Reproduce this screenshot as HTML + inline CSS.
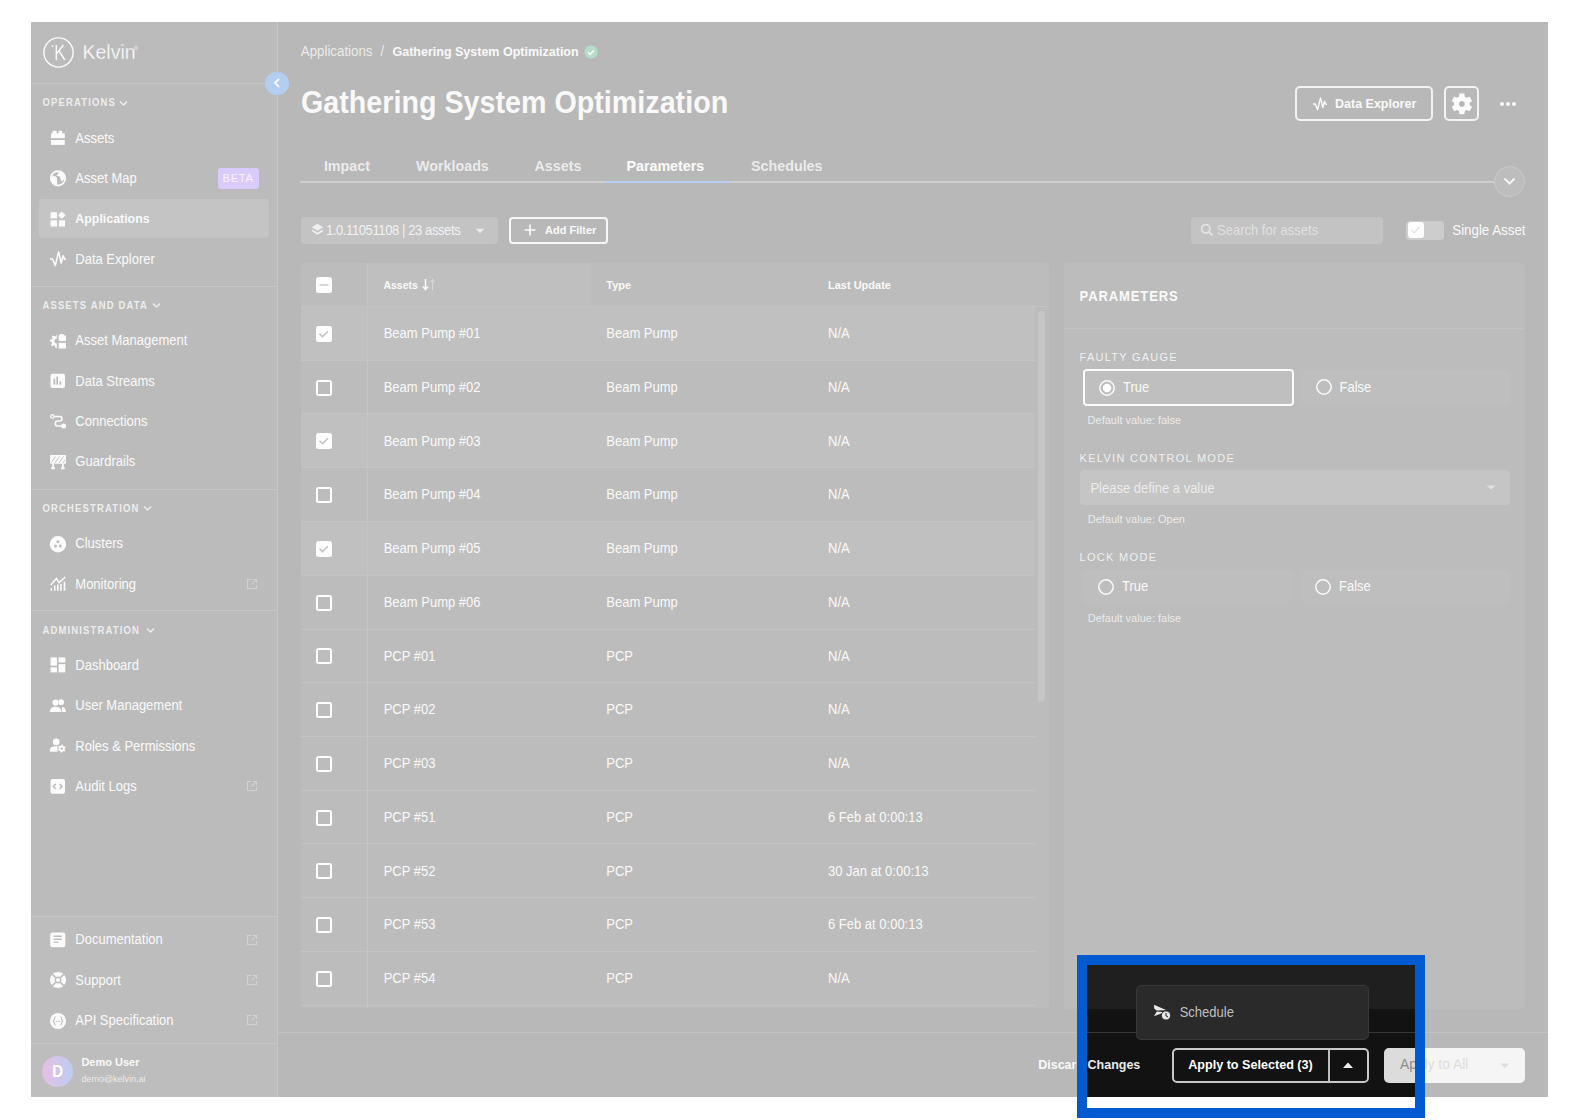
<!DOCTYPE html><html><head><meta charset="utf-8"><style>
html,body{margin:0;padding:0;}
body{width:1580px;height:1120px;position:relative;overflow:hidden;background:#ffffff;font-family:"Liberation Sans", sans-serif;}
.t{position:absolute;white-space:nowrap;}
.r{position:absolute;display:block;}
</style></head><body>
<div class="r" style="left:31px;top:22px;width:1517px;height:1075px;background:#121212;"></div>
<div class="r" style="left:31px;top:22px;width:246px;height:1075px;background:#1c1c1c;"></div>
<div class="r" style="left:31px;top:916px;width:246px;height:181px;background:#222222;"></div>
<div class="r" style="left:277px;top:22px;width:1px;height:1075px;background:#3c3c3c;"></div>
<div class="r" style="left:31px;top:83px;width:246px;height:1px;background:#3c3c3c;"></div>
<div class="r" style="left:31px;top:286px;width:246px;height:1px;background:#3c3c3c;"></div>
<div class="r" style="left:31px;top:489px;width:246px;height:1px;background:#3c3c3c;"></div>
<div class="r" style="left:31px;top:610px;width:246px;height:1px;background:#3c3c3c;"></div>
<div class="r" style="left:31px;top:916px;width:246px;height:1px;background:#3c3c3c;"></div>
<div class="r" style="left:31px;top:1043px;width:246px;height:1px;background:#3c3c3c;"></div>
<svg class="r" style="left:42px;top:36px;" width="34" height="34" viewBox="0 0 34 34"><circle cx="16.5" cy="16.5" r="14.6" fill="none" stroke="#f2f2f2" stroke-width="1.4"/><path d="M14.3 9V24M14.3 18L21.5 9M17 15L22.8 24" fill="none" stroke="#f2f2f2" stroke-width="1.4"/><circle cx="10.6" cy="10.2" r="0.9" fill="#f2f2f2"/></svg>
<div class="t" style="left:82.50px;top:43.49px;font-size:19.5px;line-height:19.5px;color:#f0f0f0;font-weight:400;transform:scaleY(1.07);transform-origin:0 16.51px;-webkit-text-stroke:0.3px #1c1c1c;">Kelvin</div>
<svg class="r" style="left:133px;top:44.5px;" width="6" height="6" viewBox="0 0 6 6"><circle cx="3" cy="3" r="1.6" fill="none" stroke="#f2f2f2" stroke-width="0.55"/></svg>
<div class="t" style="left:42.40px;top:98.46px;font-size:9.5px;line-height:9.5px;color:#c4c4c4;font-weight:700;letter-spacing:1.15px;transform:scaleY(1.07);transform-origin:0 8.04px;">OPERATIONS</div>
<svg class="r" style="left:119px;top:99.5px;" width="9" height="7" viewBox="0 0 9 7"><path d="M1 1.5L4.5 5L8 1.5" fill="none" stroke="#c4c4c4" stroke-width="1.5"/></svg>
<div class="t" style="left:42.40px;top:300.96px;font-size:9.5px;line-height:9.5px;color:#c4c4c4;font-weight:700;letter-spacing:1.15px;transform:scaleY(1.07);transform-origin:0 8.04px;">ASSETS AND DATA</div>
<svg class="r" style="left:152px;top:302px;" width="9" height="7" viewBox="0 0 9 7"><path d="M1 1.5L4.5 5L8 1.5" fill="none" stroke="#c4c4c4" stroke-width="1.5"/></svg>
<div class="t" style="left:42.40px;top:503.96px;font-size:9.5px;line-height:9.5px;color:#c4c4c4;font-weight:700;letter-spacing:1.15px;transform:scaleY(1.07);transform-origin:0 8.04px;">ORCHESTRATION</div>
<svg class="r" style="left:143px;top:505px;" width="9" height="7" viewBox="0 0 9 7"><path d="M1 1.5L4.5 5L8 1.5" fill="none" stroke="#c4c4c4" stroke-width="1.5"/></svg>
<div class="t" style="left:42.40px;top:625.96px;font-size:9.5px;line-height:9.5px;color:#c4c4c4;font-weight:700;letter-spacing:1.15px;transform:scaleY(1.07);transform-origin:0 8.04px;">ADMINISTRATION</div>
<svg class="r" style="left:146px;top:627px;" width="9" height="7" viewBox="0 0 9 7"><path d="M1 1.5L4.5 5L8 1.5" fill="none" stroke="#c4c4c4" stroke-width="1.5"/></svg>
<div class="r" style="left:39px;top:199px;width:230px;height:39px;background:#3a3a3a;border-radius:4px;"></div>
<div class="t" style="left:75.30px;top:131.79px;font-size:13px;line-height:13px;color:#ececec;font-weight:400;transform:scaleY(1.07);transform-origin:0 11.01px;">Assets</div>
<svg class="r" style="left:50px;top:130.00px;overflow:visible" width="16" height="16" viewBox="0 0 16 16"><rect x="2.4" y="0.7" width="4.3" height="4" rx="1" fill="#f2f2f2"/><rect x="8.6" y="0.7" width="3.6" height="4" rx="1" fill="#f2f2f2"/><rect x="1" y="3.4" width="13.8" height="4.8" fill="#f2f2f2"/><rect x="1" y="10" width="13.8" height="4.9" fill="#f2f2f2"/></svg>
<div class="t" style="left:75.30px;top:171.79px;font-size:13px;line-height:13px;color:#ececec;font-weight:400;transform:scaleY(1.07);transform-origin:0 11.01px;">Asset Map</div>
<svg class="r" style="left:50px;top:170.00px;overflow:visible" width="16" height="16" viewBox="0 0 16 16"><circle cx="8" cy="8.3" r="7.2" fill="none" stroke="#f2f2f2" stroke-width="1.8"/><path d="M2 5.5C4 6.5 5.5 5.8 6.5 7.2C7.6 8.8 6.6 10.5 7.2 12.5L6.8 15.2C3.5 14.5 1 11.5 1.2 8Z" fill="#f2f2f2"/><path d="M8.2 1.2C8.8 3 8.4 4.8 6 5.2L10 6.8C10.6 8.5 10.3 10 11.8 11.5L14.6 8.8C14.8 5.5 12.8 2.5 10.5 1.4Z" fill="#f2f2f2"/></svg>
<div class="t" style="left:75.30px;top:212.80px;font-size:12.4px;line-height:12.4px;color:#ececec;font-weight:700;transform:scaleY(1.07);transform-origin:0 10.50px;">Applications</div>
<svg class="r" style="left:50px;top:210.50px;overflow:visible" width="16" height="16" viewBox="0 0 16 16"><rect x="0.55" y="1.25" width="6.45" height="6.15" fill="#f2f2f2"/><rect x="0.55" y="9.3" width="6.45" height="6.2" fill="#f2f2f2"/><rect x="8.9" y="9.3" width="6.1" height="6.2" fill="#f2f2f2"/><path d="M11.8 0.4L15.6 4.2L11.8 8L8 4.2Z" fill="#f2f2f2"/></svg>
<div class="t" style="left:75.30px;top:252.79px;font-size:13px;line-height:13px;color:#ececec;font-weight:400;transform:scaleY(1.07);transform-origin:0 11.01px;">Data Explorer</div>
<svg class="r" style="left:50px;top:251.00px;overflow:visible" width="16" height="16" viewBox="0 0 16 16"><path d="M0 8H2.6L5.3 14.6L8.6 1L11.2 12L13.1 4.8L14.6 8.2H16" fill="none" stroke="#f2f2f2" stroke-width="1.6" stroke-linejoin="round"/></svg>
<div class="t" style="left:75.30px;top:334.29px;font-size:13px;line-height:13px;color:#ececec;font-weight:400;transform:scaleY(1.07);transform-origin:0 11.01px;">Asset Management</div>
<svg class="r" style="left:50px;top:332.50px;overflow:visible" width="16" height="16" viewBox="0 0 16 16"><polygon points="6.80,1.20 8.17,1.33 8.71,3.58 9.58,4.04 11.75,3.25 12.62,4.31 11.42,6.29 11.70,7.22 13.80,8.20 13.67,9.57 11.42,10.11 10.96,10.98 11.75,13.15 10.69,14.02 8.71,12.82 7.78,13.10 6.80,15.20 5.43,15.07 4.89,12.82 4.02,12.36 1.85,13.15 0.98,12.09 2.18,10.11 1.90,9.18 -0.20,8.20 -0.07,6.83 2.18,6.29 2.64,5.42 1.85,3.25 2.91,2.38 4.89,3.58 5.82,3.30" fill="#f2f2f2"/><circle cx="6.8" cy="8.2" r="2.4" fill="#1c1c1c"/><rect x="6.8" y="0" width="9.2" height="16" fill="#1c1c1c"/><path d="M8.6 7.9V2.6L10.2 1H13.2L14.4 2.4H16V7.9Z" fill="#f2f2f2"/><rect x="8.6" y="9.8" width="7.4" height="5.7" fill="#f2f2f2"/></svg>
<div class="t" style="left:75.30px;top:374.79px;font-size:13px;line-height:13px;color:#ececec;font-weight:400;transform:scaleY(1.07);transform-origin:0 11.01px;">Data Streams</div>
<svg class="r" style="left:50px;top:373.00px;overflow:visible" width="16" height="16" viewBox="0 0 16 16"><rect x="0.5" y="0.7" width="14.5" height="14.3" rx="2.2" fill="#f2f2f2"/><rect x="3.5" y="5.8" width="1.7" height="5.9" fill="#1c1c1c"/><rect x="6.4" y="3.6" width="1.7" height="8.1" fill="#1c1c1c"/><rect x="9.5" y="8.4" width="1.7" height="3.3" fill="#1c1c1c"/></svg>
<div class="t" style="left:75.30px;top:414.79px;font-size:13px;line-height:13px;color:#ececec;font-weight:400;transform:scaleY(1.07);transform-origin:0 11.01px;">Connections</div>
<svg class="r" style="left:50px;top:413.00px;overflow:visible" width="16" height="16" viewBox="0 0 16 16"><circle cx="2.4" cy="3.4" r="1.7" fill="none" stroke="#f2f2f2" stroke-width="1.3"/><circle cx="13.6" cy="13" r="2.5" fill="#f2f2f2"/><path d="M4.2 3.5H10C12.6 3.5 12.6 8 10 8H7.4C4.6 8 4.6 12.9 7.4 12.9H12" fill="none" stroke="#f2f2f2" stroke-width="1.5"/></svg>
<div class="t" style="left:75.30px;top:455.29px;font-size:13px;line-height:13px;color:#ececec;font-weight:400;transform:scaleY(1.07);transform-origin:0 11.01px;">Guardrails</div>
<svg class="r" style="left:50px;top:453.50px;overflow:visible" width="16" height="16" viewBox="0 0 16 16"><rect x="0" y="1.1" width="16" height="8.6" rx="0.8" fill="#f2f2f2"/><path d="M1.5 8.2L5.5 2.6M5 8.9L9.6 2.2M9 8.9L13.6 2.2M13 8.9L15.2 5.6" stroke="#1c1c1c" stroke-width="0.9"/><rect x="2.2" y="9.7" width="1.8" height="4" fill="#f2f2f2"/><rect x="12" y="9.7" width="1.8" height="4" fill="#f2f2f2"/><rect x="1.2" y="13.2" width="3.8" height="2.1" rx="0.6" fill="#f2f2f2"/><rect x="11" y="13.2" width="3.8" height="2.1" rx="0.6" fill="#f2f2f2"/></svg>
<div class="t" style="left:75.30px;top:537.29px;font-size:13px;line-height:13px;color:#ececec;font-weight:400;transform:scaleY(1.07);transform-origin:0 11.01px;">Clusters</div>
<svg class="r" style="left:50px;top:535.50px;overflow:visible" width="16" height="16" viewBox="0 0 16 16"><circle cx="8" cy="8.2" r="8.2" fill="#f2f2f2"/><circle cx="7.9" cy="5.8" r="1.5" fill="#1c1c1c"/><circle cx="5.5" cy="9.9" r="1.5" fill="#1c1c1c"/><circle cx="10.2" cy="9.9" r="1.5" fill="#1c1c1c"/></svg>
<div class="t" style="left:75.30px;top:577.79px;font-size:13px;line-height:13px;color:#ececec;font-weight:400;transform:scaleY(1.07);transform-origin:0 11.01px;">Monitoring</div>
<svg class="r" style="left:50px;top:576.00px;overflow:visible" width="16" height="16" viewBox="0 0 16 16"><path d="M0.8 9L6.4 2.6L9.1 6.6L15.3 1" fill="none" stroke="#f2f2f2" stroke-width="1.5"/><rect x="0.5" y="12.2" width="1.5" height="2.6" fill="#f2f2f2"/><rect x="4" y="9.6" width="1.5" height="5.2" fill="#f2f2f2"/><rect x="7" y="8.6" width="1.6" height="6.2" fill="#f2f2f2"/><rect x="10.2" y="7.9" width="1.6" height="6.9" fill="#f2f2f2"/><rect x="13.7" y="5.6" width="1.6" height="9.2" fill="#f2f2f2"/></svg>
<svg class="r" style="left:246px;top:578px;" width="12" height="12" viewBox="0 0 12 12"><path d="M5 1.5H1.5V10.5H10.5V7M7 1.5H10.5V5M10.5 1.5L5.5 6.5" fill="none" stroke="#6a6a6a" stroke-width="1.1"/></svg>
<div class="t" style="left:75.30px;top:658.79px;font-size:13px;line-height:13px;color:#ececec;font-weight:400;transform:scaleY(1.07);transform-origin:0 11.01px;">Dashboard</div>
<svg class="r" style="left:50px;top:657.00px;overflow:visible" width="16" height="16" viewBox="0 0 16 16"><rect x="0.55" y="0.4" width="6.45" height="8.3" fill="#f2f2f2"/><rect x="8.6" y="0.4" width="6.7" height="5.1" fill="#f2f2f2"/><rect x="0.55" y="10.3" width="6.45" height="5.1" fill="#f2f2f2"/><rect x="8.6" y="7.1" width="6.7" height="8.3" fill="#f2f2f2"/></svg>
<div class="t" style="left:75.30px;top:699.29px;font-size:13px;line-height:13px;color:#ececec;font-weight:400;transform:scaleY(1.07);transform-origin:0 11.01px;">User Management</div>
<svg class="r" style="left:50px;top:697.50px;overflow:visible" width="16" height="16" viewBox="0 0 16 16"><circle cx="11" cy="4.2" r="3" fill="#f2f2f2"/><path d="M12 8.8C14.6 9.3 16 10.9 16 14H12Z" fill="#f2f2f2"/><circle cx="5.6" cy="4.6" r="3.5" fill="#1c1c1c"/><circle cx="5.6" cy="4.6" r="3.1" fill="#f2f2f2"/><path d="M-0.6 14.6C-0.6 10.2 2.2 8.4 5.6 8.4C9 8.4 12.3 10.2 12.3 14.6Z" fill="#1c1c1c"/><path d="M-0.2 14C-0.2 10.3 2.5 8.8 5.6 8.8C8.7 8.8 11.6 10.3 11.6 14Z" fill="#f2f2f2"/></svg>
<div class="t" style="left:75.30px;top:739.79px;font-size:13px;line-height:13px;color:#ececec;font-weight:400;transform:scaleY(1.07);transform-origin:0 11.01px;">Roles & Permissions</div>
<svg class="r" style="left:50px;top:738.00px;overflow:visible" width="16" height="16" viewBox="0 0 16 16"><circle cx="6.2" cy="3.9" r="3.3" fill="#f2f2f2"/><path d="M-0.2 13.8V12C-0.2 9.8 2.6 8.3 6 8.3C6.6 8.3 7.2 8.4 7.6 8.5V13.8Z" fill="#f2f2f2"/><polygon points="11.80,6.10 12.96,6.25 13.50,7.66 14.20,8.20 15.70,8.35 16.15,9.44 15.20,10.60 15.08,11.48 15.70,12.85 14.98,13.78 13.50,13.54 12.68,13.88 11.80,15.10 10.64,14.95 10.10,13.54 9.40,13.00 7.90,12.85 7.45,11.76 8.40,10.60 8.52,9.72 7.90,8.35 8.62,7.42 10.10,7.66 10.92,7.32" fill="#1c1c1c"/><polygon points="11.80,6.60 12.84,6.74 13.30,8.00 13.92,8.48 15.26,8.60 15.66,9.56 14.80,10.60 14.70,11.38 15.26,12.60 14.63,13.43 13.30,13.20 12.58,13.50 11.80,14.60 10.76,14.46 10.30,13.20 9.68,12.72 8.34,12.60 7.94,11.64 8.80,10.60 8.90,9.82 8.34,8.60 8.97,7.77 10.30,8.00 11.02,7.70" fill="#f2f2f2"/><circle cx="11.8" cy="10.6" r="1.2" fill="#1c1c1c"/></svg>
<div class="t" style="left:75.30px;top:780.29px;font-size:13px;line-height:13px;color:#ececec;font-weight:400;transform:scaleY(1.07);transform-origin:0 11.01px;">Audit Logs</div>
<svg class="r" style="left:50px;top:778.50px;overflow:visible" width="16" height="16" viewBox="0 0 16 16"><rect x="0.55" y="0.1" width="14.45" height="14.7" rx="2" fill="#f2f2f2"/><path d="M5.8 5L3.5 7.5L5.8 10M9.6 5L11.9 7.5L9.6 10" fill="none" stroke="#1c1c1c" stroke-width="1.5"/></svg>
<svg class="r" style="left:246px;top:780px;" width="12" height="12" viewBox="0 0 12 12"><path d="M5 1.5H1.5V10.5H10.5V7M7 1.5H10.5V5M10.5 1.5L5.5 6.5" fill="none" stroke="#6a6a6a" stroke-width="1.1"/></svg>
<div class="t" style="left:75.30px;top:933.39px;font-size:13px;line-height:13px;color:#ececec;font-weight:400;transform:scaleY(1.07);transform-origin:0 11.01px;">Documentation</div>
<svg class="r" style="left:50px;top:931.60px;overflow:visible" width="16" height="16" viewBox="0 0 16 16"><rect x="0.3" y="0.4" width="15" height="14.8" rx="2" fill="#f2f2f2"/><path d="M3.6 4.3H11.8M3.6 7.2H11.8M3.6 10.1H8.6" stroke="#222222" stroke-width="1.4"/></svg>
<svg class="r" style="left:246px;top:934px;" width="12" height="12" viewBox="0 0 12 12"><path d="M5 1.5H1.5V10.5H10.5V7M7 1.5H10.5V5M10.5 1.5L5.5 6.5" fill="none" stroke="#6a6a6a" stroke-width="1.1"/></svg>
<div class="t" style="left:75.30px;top:974.19px;font-size:13px;line-height:13px;color:#ececec;font-weight:400;transform:scaleY(1.07);transform-origin:0 11.01px;">Support</div>
<svg class="r" style="left:50px;top:972.40px;overflow:visible" width="16" height="16" viewBox="0 0 16 16"><circle cx="8" cy="8" r="8" fill="#f2f2f2"/><circle cx="8" cy="8" r="3.4" fill="#222222"/><circle cx="8" cy="8" r="2.1" fill="#f2f2f2"/><path d="M2.3 2.3L5.5 5.5M13.7 2.3L10.5 5.5M2.3 13.7L5.5 10.5M13.7 13.7L10.5 10.5" stroke="#222222" stroke-width="1.7"/></svg>
<svg class="r" style="left:246px;top:974px;" width="12" height="12" viewBox="0 0 12 12"><path d="M5 1.5H1.5V10.5H10.5V7M7 1.5H10.5V5M10.5 1.5L5.5 6.5" fill="none" stroke="#6a6a6a" stroke-width="1.1"/></svg>
<div class="t" style="left:75.30px;top:1014.29px;font-size:13px;line-height:13px;color:#ececec;font-weight:400;transform:scaleY(1.07);transform-origin:0 11.01px;">API Specification</div>
<svg class="r" style="left:50px;top:1012.50px;overflow:visible" width="16" height="16" viewBox="0 0 16 16"><circle cx="8" cy="8" r="8" fill="#f2f2f2"/><path d="M5.6 3.8C4 3.8 4.6 7.4 3.4 8C4.6 8.6 4 12.2 5.6 12.2M10.4 3.8C12 3.8 11.4 7.4 12.6 8C11.4 8.6 12 12.2 10.4 12.2" fill="none" stroke="#222222" stroke-width="1.1"/><circle cx="6.5" cy="8.3" r="0.55" fill="#222222"/><circle cx="8" cy="8.3" r="0.55" fill="#222222"/><circle cx="9.5" cy="8.3" r="0.55" fill="#222222"/></svg>
<svg class="r" style="left:246px;top:1014px;" width="12" height="12" viewBox="0 0 12 12"><path d="M5 1.5H1.5V10.5H10.5V7M7 1.5H10.5V5M10.5 1.5L5.5 6.5" fill="none" stroke="#6a6a6a" stroke-width="1.1"/></svg>
<div class="r" style="left:218px;top:167.5px;width:41px;height:21.5px;background:#7f55f7;border-radius:3px;"></div>
<div class="t" style="left:222.50px;top:173.12px;font-size:11.2px;line-height:11.2px;color:#e4dcfa;font-weight:400;letter-spacing:0.7px;">BETA</div>
<div class="r" style="left:42px;top:1055.5px;width:31px;height:31px;border-radius:50%;background:linear-gradient(90deg,#b02aa0,#1a5ad0);"></div>
<div class="t" style="left:52.30px;top:1063.60px;font-size:15px;line-height:15px;color:#ffffff;font-weight:700;transform:scaleY(1.07);transform-origin:0 12.70px;">D</div>
<div class="t" style="left:81.40px;top:1057.29px;font-size:11px;line-height:11px;color:#ececec;font-weight:700;transform:scaleY(1.07);transform-origin:0 9.31px;">Demo User</div>
<div class="t" style="left:81.40px;top:1075.38px;font-size:9px;line-height:9px;color:#c0c0c0;font-weight:400;transform:scaleY(1.07);transform-origin:0 7.62px;">demo@kelvin.ai</div>
<div class="r" style="left:265.2px;top:71.6px;width:23.5px;height:23.5px;border-radius:50%;background:#005ad0;"></div>
<svg class="r" style="left:271px;top:77px;" width="12" height="12" viewBox="0 0 12 12"><path d="M8 1.8L4 5.8L8 9.8" fill="none" stroke="#ffffff" stroke-width="1.8"/></svg>
<div class="t" style="left:300.80px;top:44.74px;font-size:13.3px;line-height:13.3px;color:#c0c0c0;font-weight:400;transform:scaleY(1.07);transform-origin:0 11.26px;">Applications</div>
<div class="t" style="left:380.50px;top:44.99px;font-size:13px;line-height:13px;color:#c0c0c0;font-weight:400;transform:scaleY(1.07);transform-origin:0 11.01px;">/</div>
<div class="t" style="left:392.50px;top:45.72px;font-size:12.5px;line-height:12.5px;color:#ececec;font-weight:700;transform:scaleY(1.07);transform-origin:0 10.58px;">Gathering System Optimization</div>
<svg class="r" style="left:583.7px;top:44.6px;" width="14" height="14" viewBox="0 0 14 14"><circle cx="7" cy="7" r="6.6" fill="#058c50"/><path d="M4 7.3L6.1 9.3L10 5.3" fill="none" stroke="#ffffff" stroke-width="1.8"/></svg>
<div class="t" style="left:301.00px;top:89.30px;font-size:28.7px;line-height:28.7px;color:#ececec;font-weight:700;transform:scaleY(1.07);transform-origin:0 24.30px;">Gathering System Optimization</div>
<div class="r" style="left:1295px;top:86px;width:134px;height:31px;border:2px solid #d8d8d8;border-radius:5px;"></div>
<svg class="r" style="left:1312.5px;top:97px" width="14" height="14" viewBox="0 0 16 16"><path d="M0 8H2.6L5.3 14.6L8.6 1L11.2 12L13.1 4.8L14.6 8.2H16" fill="none" stroke="#f2f2f2" stroke-width="1.6" stroke-linejoin="round"/></svg>
<div class="t" style="left:1335.00px;top:98.02px;font-size:12.5px;line-height:12.5px;color:#ececec;font-weight:700;transform:scaleY(1.07);transform-origin:0 10.58px;">Data Explorer</div>
<div class="r" style="left:1444px;top:86px;width:31px;height:31px;border:2px solid #d8d8d8;border-radius:5px;"></div>
<svg class="r" style="left:1448.7px;top:90.6px" width="25.8" height="25.8" viewBox="0 0 24 24"><path d="M19.14 12.94c.04-.3.06-.61.06-.94 0-.32-.02-.64-.07-.94l2.03-1.58c.18-.14.23-.41.12-.61l-1.92-3.32c-.12-.22-.37-.29-.59-.22l-2.39.96c-.5-.38-1.03-.7-1.62-.94l-.36-2.54c-.04-.24-.24-.41-.48-.41h-3.84c-.24 0-.43.17-.47.41l-.36 2.54c-.59.24-1.130.57-1.62.94l-2.39-.96c-.22-.08-.47 0-.59.22L2.74 8.87c-.12.21-.08.47.12.61l2.03 1.58c-.05.3-.09.63-.09.94s.02.64.07.94l-2.03 1.58c-.18.14-.23.41-.12.61l1.92 3.320c.12.22.37.29.59.22l2.39-.96c.5.38 1.03.7 1.62.94l.36 2.54c.05.24.24.41.48.41h3.84c.24 0 .44-.17.47-.41l.36-2.54c.59-.24 1.13-.56 1.62-.94l2.39.96c.22.08.47 0 .59-.22l1.92-3.32c.12-.22.07-.47-.12-.61l-2.01-1.58zM12 14.7c-1.49 0-2.7-1.21-2.7-2.7s1.21-2.7 2.7-2.7 2.7 1.21 2.7 2.7-1.21 2.7-2.7 2.7z" fill="#f2f2f2"/></svg>
<div class="r" style="left:1500px;top:102px;width:4.2px;height:4.2px;border-radius:50%;background:#f2f2f2;"></div>
<div class="r" style="left:1506px;top:102px;width:4.2px;height:4.2px;border-radius:50%;background:#f2f2f2;"></div>
<div class="r" style="left:1512px;top:102px;width:4.2px;height:4.2px;border-radius:50%;background:#f2f2f2;"></div>
<div class="r" style="left:300px;top:181px;width:1194px;height:2px;background:#5a5a5a;"></div>
<div class="r" style="left:604.8px;top:181px;width:125.20000000000005px;height:2px;background:#005ad0;"></div>
<div class="t" style="left:323.90px;top:158.89px;font-size:14.3px;line-height:14.3px;color:#bdbdbd;font-weight:700;transform:scaleY(1.07);transform-origin:0 12.11px;">Impact</div>
<div class="t" style="left:416.00px;top:158.89px;font-size:14.3px;line-height:14.3px;color:#bdbdbd;font-weight:700;transform:scaleY(1.07);transform-origin:0 12.11px;">Workloads</div>
<div class="t" style="left:534.50px;top:158.89px;font-size:14.3px;line-height:14.3px;color:#bdbdbd;font-weight:700;transform:scaleY(1.07);transform-origin:0 12.11px;">Assets</div>
<div class="t" style="left:626.40px;top:158.89px;font-size:14.3px;line-height:14.3px;color:#f2f2f2;font-weight:700;transform:scaleY(1.07);transform-origin:0 12.11px;">Parameters</div>
<div class="t" style="left:751.00px;top:158.89px;font-size:14.3px;line-height:14.3px;color:#bdbdbd;font-weight:700;transform:scaleY(1.07);transform-origin:0 12.11px;">Schedules</div>
<div class="r" style="left:1494px;top:166px;width:29px;height:29px;border-radius:50%;border:1px solid #4a4a4a;background:#222222;"></div>
<svg class="r" style="left:1502px;top:173.5px;" width="15" height="15" viewBox="0 0 15 15"><path d="M2.5 4.5L7.5 9.5L12.5 4.5" fill="none" stroke="#dcdcdc" stroke-width="2"/></svg>
<div class="r" style="left:301px;top:217px;width:197px;height:27px;background:#383838;border-radius:4px;"></div>
<svg class="r" style="left:310.5px;top:223px;" width="13" height="14" viewBox="0 0 13 14"><path d="M6.5 0.8L12.3 4.3L6.5 7.8L0.7 4.3Z" fill="#c8c8c8"/><path d="M1.2 7.6L6.5 10.8L11.8 7.6" fill="none" stroke="#c8c8c8" stroke-width="1.8"/></svg>
<div class="t" style="left:326.00px;top:224.29px;font-size:13px;line-height:13px;color:#d4d4d4;font-weight:400;letter-spacing:-0.4px;transform:scaleY(1.07);transform-origin:0 11.01px;">1.0.11051108 | 23 assets</div>
<svg class="r" style="left:474.5px;top:228px;" width="10" height="6" viewBox="0 0 10 6"><path d="M0.5 0.8H9.5L5 5.2Z" fill="#b8b8b8"/></svg>
<div class="r" style="left:509px;top:216.5px;width:95px;height:23.5px;border:2px solid #e6e6e6;border-radius:4px;"></div>
<svg class="r" style="left:523.5px;top:224px;" width="12" height="12" viewBox="0 0 12 12"><path d="M6 0.5V11.5M0.5 6H11.5" stroke="#f2f2f2" stroke-width="1.6"/></svg>
<div class="t" style="left:545.00px;top:224.99px;font-size:11px;line-height:11px;color:#ececec;font-weight:700;transform:scaleY(1.07);transform-origin:0 9.31px;">Add Filter</div>
<div class="r" style="left:1191px;top:217px;width:192px;height:27px;background:#383838;border-radius:4px;"></div>
<svg class="r" style="left:1200px;top:223px;" width="14" height="14" viewBox="0 0 14 14"><circle cx="5.8" cy="5.8" r="4.2" fill="none" stroke="#a0a0a0" stroke-width="1.8"/><path d="M8.8 8.8L12.5 12.5" stroke="#a0a0a0" stroke-width="2"/></svg>
<div class="t" style="left:1217.00px;top:223.99px;font-size:13px;line-height:13px;color:#9a9a9a;font-weight:400;transform:scaleY(1.07);transform-origin:0 11.01px;">Search for assets</div>
<div class="r" style="left:1406px;top:220.5px;width:38px;height:19.5px;background:#585858;border-radius:4px;"></div>
<div class="r" style="left:1408px;top:222px;width:15.5px;height:16px;background:#ffffff;border-radius:3px;"></div>
<svg class="r" style="left:1410px;top:225px;" width="11" height="10" viewBox="0 0 11 10"><path d="M1.5 5L4.3 7.8L9.5 2" fill="none" stroke="#9a9a9a" stroke-width="1.2"/></svg>
<div class="t" style="left:1452.30px;top:224.04px;font-size:13.3px;line-height:13.3px;color:#ececec;font-weight:400;transform:scaleY(1.07);transform-origin:0 11.26px;">Single Asset</div>
<div class="r" style="left:301px;top:263px;width:748px;height:745px;background:#1f1f1f;border-radius:2px;"></div>
<div class="r" style="left:367px;top:263px;width:224px;height:43px;background:#2a2a2a;"></div>
<div class="r" style="left:301px;top:306px;width:748px;height:1px;background:#3a3a3a;"></div>
<div class="t" style="left:383.40px;top:280.41px;font-size:10.5px;line-height:10.5px;color:#ececec;font-weight:700;transform:scaleY(1.07);transform-origin:0 8.89px;">Assets</div>
<svg class="r" style="left:422px;top:278px;" width="14" height="13" viewBox="0 0 14 13"><path d="M3.5 1V11M1 8.5L3.5 11.5L6 8.5" fill="none" stroke="#f0f0f0" stroke-width="1.5"/><path d="M10.5 12V2M8.5 4L10.5 1.5L12.5 4" fill="none" stroke="#808080" stroke-width="1.1"/></svg>
<div class="t" style="left:606.30px;top:279.99px;font-size:11px;line-height:11px;color:#ececec;font-weight:700;transform:scaleY(1.07);transform-origin:0 9.31px;">Type</div>
<div class="t" style="left:828.00px;top:279.99px;font-size:11px;line-height:11px;color:#ececec;font-weight:700;transform:scaleY(1.07);transform-origin:0 9.31px;">Last Update</div>
<div class="r" style="left:316px;top:277px;width:16px;height:16px;border-radius:2.5px;background:#ffffff;"></div>
<svg class="r" style="left:316px;top:277px;" width="16" height="16" viewBox="0 0 16 16"><path d="M3.5 8H12.5" stroke="#5a5a5a" stroke-width="1.6"/></svg>
<div class="r" style="left:301px;top:307px;width:734px;height:53px;background:#2c2c2c;"></div>
<div class="r" style="left:301px;top:360px;width:734px;height:1px;background:#3a3a3a;"></div>
<div class="r" style="left:316px;top:326px;width:16px;height:16px;border-radius:2.5px;background:#ffffff;"></div>
<svg class="r" style="left:316px;top:326px;" width="16" height="16" viewBox="0 0 16 16"><path d="M3.5 7.8L6.5 10.8L12 5.2" fill="none" stroke="#303030" stroke-width="1.5"/></svg>
<div class="t" style="left:383.70px;top:327.07px;font-size:13px;line-height:13px;color:#ececec;font-weight:400;transform:scaleY(1.07);transform-origin:0 11.01px;">Beam Pump #01</div>
<div class="t" style="left:606.30px;top:327.07px;font-size:13px;line-height:13px;color:#ececec;font-weight:400;transform:scaleY(1.07);transform-origin:0 11.01px;">Beam Pump</div>
<div class="t" style="left:828.00px;top:327.07px;font-size:13px;line-height:13px;color:#ececec;font-weight:400;transform:scaleY(1.07);transform-origin:0 11.01px;">N/A</div>
<div class="r" style="left:301px;top:413px;width:734px;height:1px;background:#3a3a3a;"></div>
<div class="r" style="left:316px;top:380px;width:12px;height:12px;border-radius:2.5px;border:2px solid #ffffff;"></div>
<div class="t" style="left:383.70px;top:380.82px;font-size:13px;line-height:13px;color:#ececec;font-weight:400;transform:scaleY(1.07);transform-origin:0 11.01px;">Beam Pump #02</div>
<div class="t" style="left:606.30px;top:380.82px;font-size:13px;line-height:13px;color:#ececec;font-weight:400;transform:scaleY(1.07);transform-origin:0 11.01px;">Beam Pump</div>
<div class="t" style="left:828.00px;top:380.82px;font-size:13px;line-height:13px;color:#ececec;font-weight:400;transform:scaleY(1.07);transform-origin:0 11.01px;">N/A</div>
<div class="r" style="left:301px;top:414px;width:734px;height:53px;background:#2c2c2c;"></div>
<div class="r" style="left:301px;top:467px;width:734px;height:1px;background:#3a3a3a;"></div>
<div class="r" style="left:316px;top:433px;width:16px;height:16px;border-radius:2.5px;background:#ffffff;"></div>
<svg class="r" style="left:316px;top:433px;" width="16" height="16" viewBox="0 0 16 16"><path d="M3.5 7.8L6.5 10.8L12 5.2" fill="none" stroke="#303030" stroke-width="1.5"/></svg>
<div class="t" style="left:383.70px;top:434.57px;font-size:13px;line-height:13px;color:#ececec;font-weight:400;transform:scaleY(1.07);transform-origin:0 11.01px;">Beam Pump #03</div>
<div class="t" style="left:606.30px;top:434.57px;font-size:13px;line-height:13px;color:#ececec;font-weight:400;transform:scaleY(1.07);transform-origin:0 11.01px;">Beam Pump</div>
<div class="t" style="left:828.00px;top:434.57px;font-size:13px;line-height:13px;color:#ececec;font-weight:400;transform:scaleY(1.07);transform-origin:0 11.01px;">N/A</div>
<div class="r" style="left:301px;top:521px;width:734px;height:1px;background:#3a3a3a;"></div>
<div class="r" style="left:316px;top:487px;width:12px;height:12px;border-radius:2.5px;border:2px solid #ffffff;"></div>
<div class="t" style="left:383.70px;top:488.32px;font-size:13px;line-height:13px;color:#ececec;font-weight:400;transform:scaleY(1.07);transform-origin:0 11.01px;">Beam Pump #04</div>
<div class="t" style="left:606.30px;top:488.32px;font-size:13px;line-height:13px;color:#ececec;font-weight:400;transform:scaleY(1.07);transform-origin:0 11.01px;">Beam Pump</div>
<div class="t" style="left:828.00px;top:488.32px;font-size:13px;line-height:13px;color:#ececec;font-weight:400;transform:scaleY(1.07);transform-origin:0 11.01px;">N/A</div>
<div class="r" style="left:301px;top:522px;width:734px;height:53px;background:#2c2c2c;"></div>
<div class="r" style="left:301px;top:575px;width:734px;height:1px;background:#3a3a3a;"></div>
<div class="r" style="left:316px;top:541px;width:16px;height:16px;border-radius:2.5px;background:#ffffff;"></div>
<svg class="r" style="left:316px;top:541px;" width="16" height="16" viewBox="0 0 16 16"><path d="M3.5 7.8L6.5 10.8L12 5.2" fill="none" stroke="#303030" stroke-width="1.5"/></svg>
<div class="t" style="left:383.70px;top:542.07px;font-size:13px;line-height:13px;color:#ececec;font-weight:400;transform:scaleY(1.07);transform-origin:0 11.01px;">Beam Pump #05</div>
<div class="t" style="left:606.30px;top:542.07px;font-size:13px;line-height:13px;color:#ececec;font-weight:400;transform:scaleY(1.07);transform-origin:0 11.01px;">Beam Pump</div>
<div class="t" style="left:828.00px;top:542.07px;font-size:13px;line-height:13px;color:#ececec;font-weight:400;transform:scaleY(1.07);transform-origin:0 11.01px;">N/A</div>
<div class="r" style="left:301px;top:629px;width:734px;height:1px;background:#3a3a3a;"></div>
<div class="r" style="left:316px;top:595px;width:12px;height:12px;border-radius:2.5px;border:2px solid #ffffff;"></div>
<div class="t" style="left:383.70px;top:595.82px;font-size:13px;line-height:13px;color:#ececec;font-weight:400;transform:scaleY(1.07);transform-origin:0 11.01px;">Beam Pump #06</div>
<div class="t" style="left:606.30px;top:595.82px;font-size:13px;line-height:13px;color:#ececec;font-weight:400;transform:scaleY(1.07);transform-origin:0 11.01px;">Beam Pump</div>
<div class="t" style="left:828.00px;top:595.82px;font-size:13px;line-height:13px;color:#ececec;font-weight:400;transform:scaleY(1.07);transform-origin:0 11.01px;">N/A</div>
<div class="r" style="left:301px;top:682px;width:734px;height:1px;background:#3a3a3a;"></div>
<div class="r" style="left:316px;top:648px;width:12px;height:12px;border-radius:2.5px;border:2px solid #ffffff;"></div>
<div class="t" style="left:383.70px;top:649.57px;font-size:13px;line-height:13px;color:#ececec;font-weight:400;transform:scaleY(1.07);transform-origin:0 11.01px;">PCP #01</div>
<div class="t" style="left:606.30px;top:649.57px;font-size:13px;line-height:13px;color:#ececec;font-weight:400;transform:scaleY(1.07);transform-origin:0 11.01px;">PCP</div>
<div class="t" style="left:828.00px;top:649.57px;font-size:13px;line-height:13px;color:#ececec;font-weight:400;transform:scaleY(1.07);transform-origin:0 11.01px;">N/A</div>
<div class="r" style="left:301px;top:736px;width:734px;height:1px;background:#3a3a3a;"></div>
<div class="r" style="left:316px;top:702px;width:12px;height:12px;border-radius:2.5px;border:2px solid #ffffff;"></div>
<div class="t" style="left:383.70px;top:703.32px;font-size:13px;line-height:13px;color:#ececec;font-weight:400;transform:scaleY(1.07);transform-origin:0 11.01px;">PCP #02</div>
<div class="t" style="left:606.30px;top:703.32px;font-size:13px;line-height:13px;color:#ececec;font-weight:400;transform:scaleY(1.07);transform-origin:0 11.01px;">PCP</div>
<div class="t" style="left:828.00px;top:703.32px;font-size:13px;line-height:13px;color:#ececec;font-weight:400;transform:scaleY(1.07);transform-origin:0 11.01px;">N/A</div>
<div class="r" style="left:301px;top:790px;width:734px;height:1px;background:#3a3a3a;"></div>
<div class="r" style="left:316px;top:756px;width:12px;height:12px;border-radius:2.5px;border:2px solid #ffffff;"></div>
<div class="t" style="left:383.70px;top:757.07px;font-size:13px;line-height:13px;color:#ececec;font-weight:400;transform:scaleY(1.07);transform-origin:0 11.01px;">PCP #03</div>
<div class="t" style="left:606.30px;top:757.07px;font-size:13px;line-height:13px;color:#ececec;font-weight:400;transform:scaleY(1.07);transform-origin:0 11.01px;">PCP</div>
<div class="t" style="left:828.00px;top:757.07px;font-size:13px;line-height:13px;color:#ececec;font-weight:400;transform:scaleY(1.07);transform-origin:0 11.01px;">N/A</div>
<div class="r" style="left:301px;top:843px;width:734px;height:1px;background:#3a3a3a;"></div>
<div class="r" style="left:316px;top:810px;width:12px;height:12px;border-radius:2.5px;border:2px solid #ffffff;"></div>
<div class="t" style="left:383.70px;top:810.82px;font-size:13px;line-height:13px;color:#ececec;font-weight:400;transform:scaleY(1.07);transform-origin:0 11.01px;">PCP #51</div>
<div class="t" style="left:606.30px;top:810.82px;font-size:13px;line-height:13px;color:#ececec;font-weight:400;transform:scaleY(1.07);transform-origin:0 11.01px;">PCP</div>
<div class="t" style="left:828.00px;top:810.82px;font-size:13px;line-height:13px;color:#ececec;font-weight:400;transform:scaleY(1.07);transform-origin:0 11.01px;">6 Feb at 0:00:13</div>
<div class="r" style="left:301px;top:897px;width:734px;height:1px;background:#3a3a3a;"></div>
<div class="r" style="left:316px;top:863px;width:12px;height:12px;border-radius:2.5px;border:2px solid #ffffff;"></div>
<div class="t" style="left:383.70px;top:864.57px;font-size:13px;line-height:13px;color:#ececec;font-weight:400;transform:scaleY(1.07);transform-origin:0 11.01px;">PCP #52</div>
<div class="t" style="left:606.30px;top:864.57px;font-size:13px;line-height:13px;color:#ececec;font-weight:400;transform:scaleY(1.07);transform-origin:0 11.01px;">PCP</div>
<div class="t" style="left:828.00px;top:864.57px;font-size:13px;line-height:13px;color:#ececec;font-weight:400;transform:scaleY(1.07);transform-origin:0 11.01px;">30 Jan at 0:00:13</div>
<div class="r" style="left:301px;top:951px;width:734px;height:1px;background:#3a3a3a;"></div>
<div class="r" style="left:316px;top:917px;width:12px;height:12px;border-radius:2.5px;border:2px solid #ffffff;"></div>
<div class="t" style="left:383.70px;top:918.32px;font-size:13px;line-height:13px;color:#ececec;font-weight:400;transform:scaleY(1.07);transform-origin:0 11.01px;">PCP #53</div>
<div class="t" style="left:606.30px;top:918.32px;font-size:13px;line-height:13px;color:#ececec;font-weight:400;transform:scaleY(1.07);transform-origin:0 11.01px;">PCP</div>
<div class="t" style="left:828.00px;top:918.32px;font-size:13px;line-height:13px;color:#ececec;font-weight:400;transform:scaleY(1.07);transform-origin:0 11.01px;">6 Feb at 0:00:13</div>
<div class="r" style="left:301px;top:1005px;width:734px;height:1px;background:#3a3a3a;"></div>
<div class="r" style="left:316px;top:971px;width:12px;height:12px;border-radius:2.5px;border:2px solid #ffffff;"></div>
<div class="t" style="left:383.70px;top:972.07px;font-size:13px;line-height:13px;color:#ececec;font-weight:400;transform:scaleY(1.07);transform-origin:0 11.01px;">PCP #54</div>
<div class="t" style="left:606.30px;top:972.07px;font-size:13px;line-height:13px;color:#ececec;font-weight:400;transform:scaleY(1.07);transform-origin:0 11.01px;">PCP</div>
<div class="t" style="left:828.00px;top:972.07px;font-size:13px;line-height:13px;color:#ececec;font-weight:400;transform:scaleY(1.07);transform-origin:0 11.01px;">N/A</div>
<div class="r" style="left:367px;top:263px;width:1px;height:745px;background:#3a3a3a;"></div>
<div class="r" style="left:1038px;top:311px;width:7.2999999999999545px;height:391px;background:#424242;border-radius:3.6px;"></div>
<div class="r" style="left:1064px;top:262.5px;width:461px;height:746.3px;background:#1f1f1f;border-radius:4px;"></div>
<div class="r" style="left:1064px;top:328px;width:461px;height:1px;background:#383838;"></div>
<div class="t" style="left:1079.60px;top:289.99px;font-size:13px;line-height:13px;color:#ececec;font-weight:700;letter-spacing:0.9px;transform:scaleY(1.07);transform-origin:0 11.01px;">PARAMETERS</div>
<div class="t" style="left:1079.60px;top:351.89px;font-size:11px;line-height:11px;color:#d0d0d0;font-weight:400;letter-spacing:1.25px;transform:scaleY(1.07);transform-origin:0 9.31px;">FAULTY GAUGE</div>
<div class="r" style="left:1083.3px;top:369.3px;width:206.5px;height:32.6px;border:2px solid #f0f0f0;border-radius:4px;background:#282828;"></div>
<div class="r" style="left:1301px;top:370px;width:209px;height:35px;background:#262626;border-radius:4px;"></div>
<svg class="r" style="left:1098px;top:378.5px;" width="18" height="18" viewBox="0 0 18 18"><circle cx="9" cy="9" r="7.2" fill="none" stroke="#f0f0f0" stroke-width="1.5"/><circle cx="9" cy="9" r="4.2" fill="#ffffff"/></svg>
<div class="t" style="left:1123.00px;top:381.49px;font-size:13px;line-height:13px;color:#ececec;font-weight:400;transform:scaleY(1.07);transform-origin:0 11.01px;">True</div>
<svg class="r" style="left:1315px;top:378px;" width="18" height="18" viewBox="0 0 18 18"><circle cx="9" cy="9" r="7.2" fill="none" stroke="#f0f0f0" stroke-width="1.5"/></svg>
<div class="t" style="left:1339.50px;top:381.49px;font-size:13px;line-height:13px;color:#ececec;font-weight:400;transform:scaleY(1.07);transform-origin:0 11.01px;">False</div>
<div class="t" style="left:1087.60px;top:414.89px;font-size:11px;line-height:11px;color:#c0c0c0;font-weight:400;transform:scaleY(1.07);transform-origin:0 9.31px;">Default value: false</div>
<div class="t" style="left:1079.60px;top:452.99px;font-size:11px;line-height:11px;color:#d0d0d0;font-weight:400;letter-spacing:1.3px;transform:scaleY(1.07);transform-origin:0 9.31px;">KELVIN CONTROL MODE</div>
<div class="r" style="left:1079.5px;top:470.4px;width:430.5px;height:34.200000000000045px;background:#3c3c3c;border-radius:4px;"></div>
<div class="t" style="left:1090.40px;top:481.69px;font-size:13px;line-height:13px;color:#c0c0c0;font-weight:400;transform:scaleY(1.07);transform-origin:0 11.01px;">Please define a value</div>
<svg class="r" style="left:1486px;top:485px;" width="10" height="5" viewBox="0 0 10 5"><path d="M0.5 0.5H9.5L5 4.8Z" fill="#9a9a9a"/></svg>
<div class="t" style="left:1087.70px;top:514.09px;font-size:11px;line-height:11px;color:#c0c0c0;font-weight:400;transform:scaleY(1.07);transform-origin:0 9.31px;">Default value: Open</div>
<div class="t" style="left:1079.60px;top:551.69px;font-size:11px;line-height:11px;color:#d0d0d0;font-weight:400;letter-spacing:1.3px;transform:scaleY(1.07);transform-origin:0 9.31px;">LOCK MODE</div>
<div class="r" style="left:1083.2px;top:569.5px;width:208.79999999999995px;height:33.89999999999998px;background:#262626;border-radius:4px;"></div>
<div class="r" style="left:1301px;top:569.5px;width:209px;height:33.89999999999998px;background:#262626;border-radius:4px;"></div>
<svg class="r" style="left:1097px;top:577.5px;" width="18" height="18" viewBox="0 0 18 18"><circle cx="9" cy="9" r="7.2" fill="none" stroke="#f0f0f0" stroke-width="1.5"/></svg>
<div class="t" style="left:1122.00px;top:580.49px;font-size:13px;line-height:13px;color:#ececec;font-weight:400;transform:scaleY(1.07);transform-origin:0 11.01px;">True</div>
<svg class="r" style="left:1314px;top:577.5px;" width="18" height="18" viewBox="0 0 18 18"><circle cx="9" cy="9" r="7.2" fill="none" stroke="#f0f0f0" stroke-width="1.5"/></svg>
<div class="t" style="left:1339.00px;top:580.49px;font-size:13px;line-height:13px;color:#ececec;font-weight:400;transform:scaleY(1.07);transform-origin:0 11.01px;">False</div>
<div class="t" style="left:1087.70px;top:612.69px;font-size:11px;line-height:11px;color:#c0c0c0;font-weight:400;transform:scaleY(1.07);transform-origin:0 9.31px;">Default value: false</div>
<div class="r" style="left:277px;top:1032px;width:1271px;height:1px;background:#383838;"></div>
<div class="t" style="left:1038.20px;top:1058.62px;font-size:12.5px;line-height:12.5px;color:#ececec;font-weight:700;transform:scaleY(1.07);transform-origin:0 10.58px;">Discard Changes</div>
<div class="r" style="left:1171.5px;top:1048px;width:193px;height:30.5px;border:2px solid #c8c8c8;border-radius:5px;background:#121212;"></div>
<div class="r" style="left:1328px;top:1049px;width:2px;height:33px;background:#c0c0c0;"></div>
<div class="t" style="left:1188.20px;top:1058.53px;font-size:12.6px;line-height:12.6px;color:#ffffff;font-weight:700;transform:scaleY(1.07);transform-origin:0 10.67px;">Apply to Selected (3)</div>
<svg class="r" style="left:1342px;top:1061px;" width="12" height="8" viewBox="0 0 12 8"><path d="M1 7H11L6 1.5Z" fill="#f0f0f0"/></svg>
<div class="r" style="left:1384px;top:1048px;width:141px;height:35px;background:#dcdcdc;border-radius:5px;"></div>
<div class="t" style="left:1400.00px;top:1057.52px;font-size:13.8px;line-height:13.8px;color:#8c8c8c;font-weight:400;transform:scaleY(1.07);transform-origin:0 11.68px;">Apply to All</div>
<svg class="r" style="left:1499.5px;top:1063px;" width="10" height="6" viewBox="0 0 10 6"><path d="M0.5 0.5H9.5L5 5Z" fill="#8c8c8c"/></svg>
<div class="r" style="left:1136.2px;top:984.7px;width:230.4px;height:53px;border:1px solid #383838;border-radius:5px;background:#2a2a2a;"></div>
<svg class="r" style="left:1153px;top:1004px;" width="19" height="17" viewBox="0 0 19 17"><path d="M1 0.8L13.5 6.2L3.6 6.6L1.2 4.6Z M1 12.2L3.8 7.6L11.5 8.2Z" fill="#e8e8e8"/><circle cx="13" cy="11.5" r="4.6" fill="#e8e8e8" stroke="#2a2a2a" stroke-width="1"/><path d="M13 9V11.6L14.8 13" fill="none" stroke="#2a2a2a" stroke-width="1.1"/></svg>
<div class="t" style="left:1179.70px;top:1005.99px;font-size:13px;line-height:13px;color:#c0c0c0;font-weight:400;transform:scaleY(1.07);transform-origin:0 11.01px;">Schedule</div>
<div class="r" style="left:0px;top:0px;width:1580px;height:965px;background:rgba(255,255,255,0.7);"></div>
<div class="r" style="left:0px;top:1108px;width:1580px;height:12px;background:rgba(255,255,255,0.7);"></div>
<div class="r" style="left:0px;top:965px;width:1087px;height:143px;background:rgba(255,255,255,0.7);"></div>
<div class="r" style="left:1415px;top:965px;width:165px;height:143px;background:rgba(255,255,255,0.7);"></div>
<div class="r" style="left:1077px;top:955px;width:328px;height:143px;border:10px solid #005ad0;"></div>
</body></html>
